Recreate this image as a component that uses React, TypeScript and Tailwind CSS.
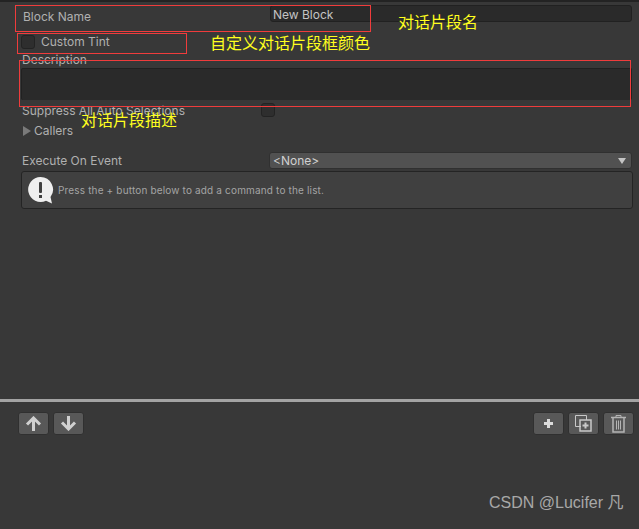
const sans = "font-['Inter','Liberation_Sans',sans-serif]";

const Checkbox = () => (
  <div className="w-[14px] h-[14px] rounded-[3px] bg-[#2e2e2e] border border-[#232323]" />
);

const ToolButton = ({ children }: { children: React.ReactNode }) => (
  <div className="w-[31px] h-[23px] rounded-[3px] bg-[#585858] border border-[#303030] flex items-center justify-center">
    {children}
  </div>
);

const App = () => {
  return (
    <div className={`relative w-[639px] h-[529px] overflow-hidden bg-[#383838] text-[12px] text-[#b0b0b0] ${sans} border-t-2 border-[#232323]`}>
      {/* inspector */}
      <div className="h-[397px] pl-[22px] pr-[7px] pt-[3px] flex flex-col">
        <div className="flex items-start h-[17px]">
          <div className="w-[248px] pl-[1px] leading-[24px]">Block Name</div>
          <div className="flex-1 h-[17px] rounded-[3px] bg-[#2a2a2a] border border-[#212121] pl-[2px] leading-[17px] text-[#c4c4c4]">New Block</div>
        </div>
        <div className="flex items-center h-[14px] mt-[13px] -ml-[1px] gap-[6px]">
          <Checkbox />
          <span>Custom Tint</span>
        </div>
        <div className="mt-[4px] leading-[14px]">Description</div>
        <div className="h-[32px] -ml-[1px] mt-[1px] rounded-[2px] bg-[#2a2a2a] border border-[#212121] border-b-0" />
        <div className="flex items-center h-[14px] mt-[3px]">
          <div className="w-[239px] pt-[1px]">Suppress All Auto Selections</div>
          <Checkbox />
        </div>
        <div className="flex items-center h-[14px] mt-[7px] ml-[1px] gap-[3px]">
          <svg width="8" height="10" viewBox="0 0 8 10"><path d="M0 0 L8 5 L0 10 Z" fill="#7a7a7a" /></svg>
          <span>Callers</span>
        </div>
        <div className="flex items-center h-[17px] mt-[14px]">
          <div className="w-[247px]">Execute On Event</div>
          <div className="flex-1 h-[17px] rounded-[3px] bg-[#515151] border border-[#303030] pl-[3px] pr-[5px] flex items-center justify-between text-[#d0d0d0]">
            <span>&lt;None&gt;</span>
            <svg width="8" height="6" viewBox="0 0 8 6"><path d="M0 0 H8 L4 6 Z" fill="#c4c4c4" /></svg>
          </div>
        </div>
        <div className="h-[38px] mt-[2px] -ml-[1px] -mr-[1px] rounded-[3px] bg-[#404040] border border-[#242424] flex items-center pl-[5px] gap-[4px] text-[10px] text-[#a4a4a4]">
          <svg width="27" height="29" viewBox="0 0 27 29" className="shrink-0">
            <path d="M13.5 1 A12.5 12.5 0 1 0 19 24.8 L25 27.5 L23.5 21 A12.5 12.5 0 0 0 13.5 1 Z" fill="#efefef" />
            <rect x="12" y="6" width="3" height="11" rx="1" fill="#404040" />
            <rect x="12" y="19" width="3" height="3" fill="#404040" />
          </svg>
          <span className="tracking-[0.16px]">Press the + button below to add a command to the list.</span>
        </div>
      </div>

      {/* divider */}
      <div className="h-[3px] bg-[#a3a3a3]" />

      {/* toolbar */}
      <div className="flex justify-between pl-[18px] pr-[5px] pt-[10px]">
        <div className="flex gap-[4px]">
          <ToolButton>
            <svg width="17" height="15" viewBox="0 0 17 15" fill="none" stroke="#d0d0d0" strokeWidth="3"><path d="M8.5 15 V2.5 M2 8.5 L8.5 2 L15 8.5" /></svg>
          </ToolButton>
          <ToolButton>
            <svg width="17" height="15" viewBox="0 0 17 15" fill="none" stroke="#d0d0d0" strokeWidth="3"><path d="M8.5 0 V12.5 M2 6.5 L8.5 13 L15 6.5" /></svg>
          </ToolButton>
        </div>
        <div className="flex gap-[4px]">
          <ToolButton>
            <svg width="11" height="11" viewBox="0 0 11 11" fill="none" stroke="#dcdcdc" strokeWidth="3"><path d="M5.5 1 V10 M1 5.5 H10" /></svg>
          </ToolButton>
          <ToolButton>
            <svg width="17" height="17" viewBox="0 0 17 17" fill="none" stroke="#c8c8c8">
              <path d="M6 11.5 H0.5 V0.5 H11.5 V5" strokeWidth="1" />
              <rect x="5" y="5" width="11" height="11" strokeWidth="1.5" />
              <path d="M10.5 7.5 V13.5 M7.5 10.5 H13.5" strokeWidth="2" />
            </svg>
          </ToolButton>
          <ToolButton>
            <svg width="15" height="18" viewBox="0 0 15 18" fill="none" stroke="#b4b4b4">
              <path d="M0 2.5 H15" strokeWidth="1.5" />
              <path d="M5 2 V0.5 H10 V2" strokeWidth="1" />
              <path d="M2 3 V17 H13 V3" strokeWidth="1.5" />
              <path d="M5.5 5.5 V14.5 M7.5 5.5 V14.5 M9.5 5.5 V14.5" strokeWidth="1" />
            </svg>
          </ToolButton>
        </div>
      </div>

      {/* annotations */}
      <div className="absolute left-[15px] top-[3px] w-[356px] h-[27px] border border-[#f03c3c]" />
      <div className="absolute left-[17px] top-[31px] w-[170px] h-[21px] border border-[#f03c3c]" />
      <div className="absolute left-[19px] top-[58px] w-[612px] h-[47px] border border-[#f03c3c]" />
      <div className="absolute left-[398px] top-[8px] text-[16px] leading-[22px] text-[#ffff1e] font-['Noto_Sans_CJK_SC',sans-serif]">对话片段名</div>
      <div className="absolute left-[210px] top-[29px] text-[16px] leading-[22px] text-[#ffff1e] font-['Noto_Sans_CJK_SC',sans-serif]">自定义对话片段框颜色</div>
      <div className="absolute left-[81px] top-[106px] text-[16px] leading-[22px] text-[#ffff1e] font-['Noto_Sans_CJK_SC',sans-serif]">对话片段描述</div>
      <div className="absolute left-[489px] top-[490px] text-[16px] leading-[22px] text-[#a8a8a8] font-['Liberation_Sans','Noto_Sans_CJK_SC',sans-serif]">CSDN @Lucifer 凡</div>
    </div>
  );
};

export default App;
